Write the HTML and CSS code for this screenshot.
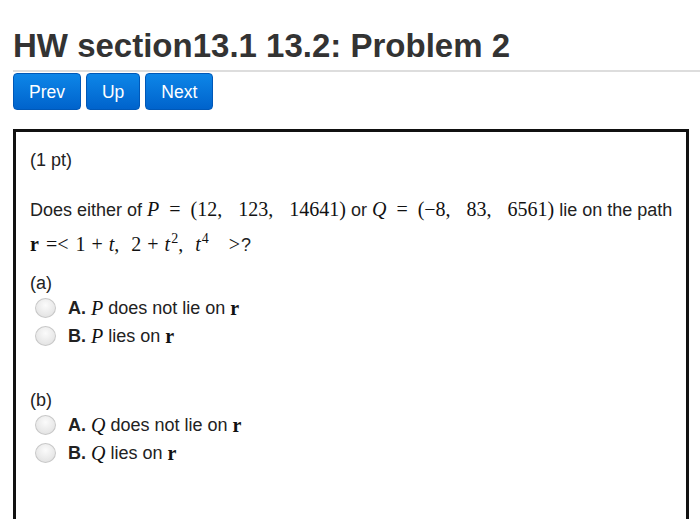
FILE: index.html
```html
<!DOCTYPE html>
<html>
<head>
<meta charset="utf-8">
<link rel="stylesheet" href="styles.css">
</head>
<body>
<div class="page">
  <h1 class="title">HW section13.1 13.2: Problem 2</h1>
  <div class="nav">
    <a class="btn">Prev</a>
    <a class="btn">Up</a>
    <a class="btn">Next</a>
  </div>
  <div class="problem">
    <p class="pts">(1 pt)</p>
    <p class="question">Does either of <span class="m"><i>P</i><span class="rel">=</span>(12,<span class="gap"></span>123,<span class="gap"></span>14641)</span> or <span class="m"><i>Q</i><span class="rel">=</span>(&minus;8,<span class="gap"></span>83,<span class="gap"></span>6561)</span> lie on the path<br><span class="m"><b>r</b><span class="rel2">=&lt;</span>1<span class="bin">+</span><i>t</i>,<span class="gap2"></span>2<span class="bin">+</span><i>t</i><sup>2</sup>,<span class="gap2"></span><i>t</i><sup>4</sup><span class="rel3">&gt;</span></span>?</p>
    <div class="part">
      <div class="plabel">(a)</div>
      <label class="opt"><span class="radio"></span><b>A.</b>&nbsp;<span class="m"><i>P</i></span> does not lie on <span class="m"><b>r</b></span></label>
      <label class="opt"><span class="radio"></span><b>B.</b>&nbsp;<span class="m"><i>P</i></span> lies on <span class="m"><b>r</b></span></label>
    </div>
    <div class="part partb">
      <div class="plabel">(b)</div>
      <label class="opt"><span class="radio"></span><b>A.</b>&nbsp;<span class="m"><i>Q</i></span> does not lie on <span class="m"><b>r</b></span></label>
      <label class="opt"><span class="radio"></span><b>B.</b>&nbsp;<span class="m"><i>Q</i></span> lies on <span class="m"><b>r</b></span></label>
    </div>
  </div>
</div>
</body>
</html>
```

FILE: styles.css
```css
html, body {
  margin: 0;
  padding: 0;
  background: #fff;
}
body {
  font-family: "Liberation Sans", Arial, Helvetica, sans-serif;
  color: #333;
  overflow: hidden;
}
.page {
  padding: 0 0 0 13px;
}
.title {
  margin: 0;
  padding-top: 27px;
  font-size: 33px;
  line-height: 38px;
  font-weight: bold;
  color: #333;
  border-bottom: 2px solid #ddd;
  padding-bottom: 5px;
}
.nav {
  display: flex;
  gap: 5px;
  margin-top: 1px;
}
.btn {
  display: block;
  height: 37px;
  line-height: 36px;
  padding: 0 15px;
  font-size: 17.5px;
  color: #fff;
  border-radius: 4px;
  background: linear-gradient(#0d86e8, #0063cc);
  border: 1px solid #0058b8;
  box-sizing: border-box;
}
.problem {
  margin-top: 19px;
  margin-right: 11px;
  border: 3px solid #111;
  border-bottom: none;
  height: 420px;
  padding: 16px 14px 0;
  font-size: 18px;
  color: #222;
}
.pts {
  margin: 0;
  line-height: 24px;
}
.question {
  margin: 20px 0 0;
  line-height: 34px;
  white-space: nowrap;
}
.m {
  font-family: "Liberation Serif", "Times New Roman", serif;
  font-size: 20px;
  color: #111;
}
.m i { font-style: italic; }
.m b { font-weight: bold; }
.rel {
  margin: 0 10px;
}
.rel2 {
  margin: 0 7px 0 7px;
}
.rel3 {
  margin: 0 1px 0 20px;
}
.bin {
  margin: 0 6px;
}
.gap {
  display: inline-block;
  width: 16px;
}
.gap2 {
  display: inline-block;
  width: 12px;
}
sup {
  font-size: 14px;
  line-height: 0;
  vertical-align: 8px;
  margin-left: 1px;
}
.part {
  margin-top: 10px;
}
.partb {
  margin-top: 39px;
}
.plabel {
  line-height: 22px;
}
.opt {
  display: flex;
  align-items: center;
  height: 28px;
  padding-left: 5px;
  white-space: pre;
}
.opt b {
  font-weight: bold;
}
.radio {
  width: 21px;
  height: 20px;
  border-radius: 50%;
  background: radial-gradient(circle at 50% 35%, #fbfbfb, #e6e6e6 70%, #d2d2d2);
  border: 1px solid #c8c8c8;
  box-sizing: border-box;
  margin-right: 12px;
  flex: none;
}
```
